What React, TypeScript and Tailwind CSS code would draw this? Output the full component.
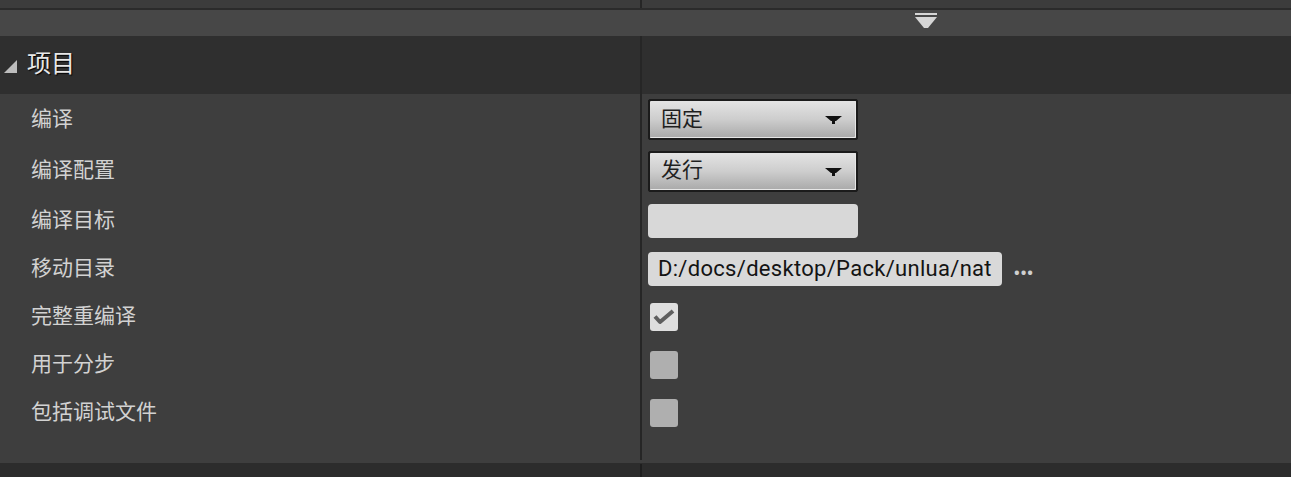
import React from "react";

const FONT = { fontFamily: '"Noto Sans", "Noto Sans CJK SC", sans-serif' };

function Combo({ label }: { label: string }) {
  return (
    <div className="w-[210px] h-[41px] rounded-[2px] border border-[#1b1b1b] bg-[#1b1b1b] p-px">
      <div className="flex h-full items-center justify-between rounded-[1px] bg-gradient-to-b from-[#e4e4e4] via-[#cdcdcd] to-[#a9a9a9] pl-[11px] pr-[14px] shadow-[inset_-1px_-1px_0_#e6e6e6]">
        <span className="text-[21px] leading-none text-[#1f1f1f] -mt-[3px]">{label}</span>
        <svg width="17" height="9" viewBox="0 0 17 9" className="mt-[2px]">
          <path d="M0 0H17L11 5H10V8H7V5H6Z" fill="#111" />
        </svg>
      </div>
    </div>
  );
}

function Check({ on }: { on?: boolean }) {
  return (
    <div className={`w-[28px] h-[28px] rounded-[3px] ${on ? "bg-[#dedede]" : "bg-[#afafaf]"}`}>
      {on && (
        <svg width="28" height="28" viewBox="0 0 28 28">
          <path d="M5 13.5L10 19L23 8" stroke="#5e5e5e" strokeWidth="4" fill="none" strokeLinejoin="round" />
        </svg>
      )}
    </div>
  );
}

function Row({ label, h, children }: { label: string; h: string; children?: React.ReactNode }) {
  return (
    <div className={`flex ${h}`}>
      <div className="w-[640px] flex items-center pl-[31px] pb-[3px] text-[21px] leading-none text-[#d2d2d2]">{label}</div>
      <div className="w-[2px] bg-[#262626]" />
      <div className="flex-1 flex items-center pl-[6px]">{children}</div>
    </div>
  );
}

export default function App() {
  return (
    <div className="w-[1291px] h-[477px] overflow-hidden flex flex-col bg-[#3e3e3e] select-none" style={FONT}>
      <div className="flex h-[8px] bg-[#3c3c3c]">
        <div className="w-[640px]" />
        <div className="w-[2px] bg-[#262626]" />
      </div>
      <div className="h-[2px] bg-[#2b2b2b]" />
      <div className="h-[26px] bg-[#474747] flex items-start pl-[915px] pt-[3px]">
        <svg width="22" height="16" viewBox="0 0 22 16">
          <rect x="0" y="0" width="22" height="2" fill="#d6d6d6" />
          <path d="M0 4H22L13 15H9Z" fill="#d6d6d6" />
        </svg>
      </div>
      <div className="flex h-[58px] bg-[#2f2f2f]">
        <div className="w-[640px] flex items-center pl-[4px]">
          <svg width="14" height="14" viewBox="0 0 14 14" className="mt-[4px]">
            <path d="M13 0V13H0Z" fill="#bdbdbd" />
          </svg>
          <span className="ml-[9px] -mt-[4px] text-[24px] leading-none text-[#e8e8e8] [text-shadow:1px_1px_1px_#000]">项目</span>
        </div>
        <div className="w-[2px] bg-[#262626]" />
      </div>
      <Row label="编译" h="h-[51px]">
        <Combo label="固定" />
      </Row>
      <Row label="编译配置" h="h-[52px]">
        <Combo label="发行" />
      </Row>
      <Row label="编译目标" h="h-[48px]">
        <div className="w-[210px] h-[34px] rounded-[4px] bg-[#d8d8d8]" />
      </Row>
      <Row label="移动目录" h="h-[48px]">
        <div className="w-[354px] h-[34px] rounded-[4px] bg-[#d9d9d9] flex items-center pl-[10px] overflow-hidden whitespace-nowrap">
          <span className="text-[22px] tracking-[0.3px] text-[#141414] leading-none" style={{ fontFamily: 'Roboto, "Noto Sans", sans-serif' }}>
            D:/docs/desktop/Pack/unlua/nat
          </span>
        </div>
        <span className="ml-[12px] mt-[6px] text-[15px] font-bold tracking-[1px] text-[#cfcfcf] leading-none">•••</span>
      </Row>
      <Row label="完整重编译" h="h-[48px]">
        <div className="pl-[2px]"><Check on /></div>
      </Row>
      <Row label="用于分步" h="h-[48px]">
        <div className="pl-[2px]"><Check /></div>
      </Row>
      <Row label="包括调试文件" h="h-[48px]">
        <div className="pl-[2px]"><Check /></div>
      </Row>
      <div className="flex h-[23px]">
        <div className="w-[640px]" />
        <div className="w-[2px] bg-[#262626]" />
      </div>
      <div className="h-[3px]" />
      <div className="flex flex-1 bg-[#2c2c2c]">
        <div className="w-[640px]" />
        <div className="w-[2px] mt-px bg-[#1e1e1e]" />
      </div>
    </div>
  );
}
